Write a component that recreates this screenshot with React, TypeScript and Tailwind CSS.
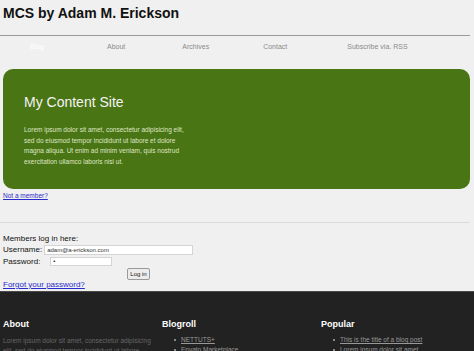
import React from "react";

export default function App() {
  const font = { fontFamily: '"Liberation Sans", Arial, sans-serif' };
  return (
    <div className="min-h-screen w-full bg-[#f0f0f0] overflow-hidden" style={font}>
      {/* Header */}
      <div className="h-[35px] pl-[3px] pt-[5px]">
        <h1 className="text-[14px] leading-[16px] font-bold text-[#111]">MCS by Adam M. Erickson</h1>
      </div>
      <div className="w-[470px] border-t border-[#9a9a9a]" />
      {/* Nav */}
      <nav className="h-[22px] flex items-center text-[7px] leading-[8px] text-[#8a8a8a]">
        <span className="ml-[30px] text-white">Blog</span>
        <span className="ml-[63px]">About</span>
        <span className="ml-[57px]">Archives</span>
        <span className="ml-[54px]">Contact</span>
        <span className="ml-[60px]">Subscribe via. RSS</span>
      </nav>
      {/* Hero */}
      <div className="mt-[11px] ml-[3px] w-[467px] h-[120px] rounded-[10px] bg-[#4a7514] pl-[21px] pt-[25px]">
        <h2 className="text-[14px] leading-[16px] text-[#f4f4f4]">My Content Site</h2>
        <p className="mt-[15px] text-[6.5px] leading-[10.5px] text-[#dfe6c6]">
          Lorem ipsum dolor sit amet, consectetur adipisicing elit,
          <br />
          sed do eiusmod tempor incididunt ut labore et dolore
          <br />
          magna aliqua. Ut enim ad minim veniam, quis nostrud
          <br />
          exercitation ullamco laboris nisi ut.
        </p>
      </div>
      <div className="mt-[3px] pl-[3px] text-[6.5px] leading-[8px]">
        <a href="#" className="text-[#2a2acc] underline">Not a member?</a>
      </div>
      <div className="mt-[22px] w-[470px] border-t border-[#dcdcdc]" />
      {/* Login */}
      <div className="pl-[3px] mt-[11px] text-[8px] leading-[10px] text-[#111]">
        <div>Members log in here:</div>
        <div className="flex items-center h-[11px] mt-[0.5px]">
          <span>Username:</span>
          <div className="ml-[2px] w-[149px] h-[10px] bg-white border border-[#d4d4d4] flex items-center pl-[2px] text-[6px] leading-[7px] text-[#333]">
            adam@a-erickson.com
          </div>
        </div>
        <div className="flex items-center h-[10px] mt-[1px]">
          <span>Password:</span>
          <div className="ml-[10px] w-[62px] h-[9px] bg-white border border-[#d4d4d4] flex items-center pl-[2px] text-[6px] leading-[7px] text-[#111]">
            •
          </div>
        </div>
        <div className="mt-[1.5px] h-[12px] flex">
          <button className="ml-[124px] w-[23px] h-[12px] text-[6px] leading-[7px] bg-[#ececec] border border-[#9a9a9a] rounded-[2px] text-[#111] flex items-center justify-center">
            Log in
          </button>
        </div>
        <div className="mt-[0px]">
          <a href="#" className="text-[#2a2acc] underline">Forgot your password?</a>
        </div>
      </div>
      {/* Footer */}
      <footer className="mt-[1px] bg-[#222222] border-t border-[#4a4a4a] h-[70px] flex pl-[3px] pt-[27px]">
        <div className="w-[159px]">
          <h3 className="text-[9px] leading-[11px] font-bold text-white">About</h3>
          <p className="mt-[6px] text-[6.5px] leading-[10px] text-[#666]">
            Lorem ipsum dolor sit amet, consectetur adipisicing
            <br />
            elit, sed do eiusmod tempor incididunt ut labore
          </p>
        </div>
        <div className="w-[159px]">
          <h3 className="text-[9px] leading-[11px] font-bold text-white">Blogroll</h3>
          <ul className="mt-[5px] text-[6.5px] leading-[10px] text-[#999]">
            <li className="flex items-center">
              <span className="ml-[12px] w-[2px] h-[2px] bg-[#888]" />
              <span className="ml-[5px] underline">NETTUTS+</span>
            </li>
            <li className="flex items-center">
              <span className="ml-[12px] w-[2px] h-[2px] bg-[#888]" />
              <span className="ml-[5px] underline">Envato Marketplace</span>
            </li>
          </ul>
        </div>
        <div className="w-[150px]">
          <h3 className="text-[9px] leading-[11px] font-bold text-white">Popular</h3>
          <ul className="mt-[5px] text-[6.5px] leading-[10px] text-[#999]">
            <li className="flex items-center">
              <span className="ml-[12px] w-[2px] h-[2px] bg-[#888]" />
              <span className="ml-[5px] underline">This is the title of a blog post</span>
            </li>
            <li className="flex items-center">
              <span className="ml-[12px] w-[2px] h-[2px] bg-[#888]" />
              <span className="ml-[5px] underline">Lorem ipsum dolor sit amet</span>
            </li>
          </ul>
        </div>
      </footer>
    </div>
  );
}
